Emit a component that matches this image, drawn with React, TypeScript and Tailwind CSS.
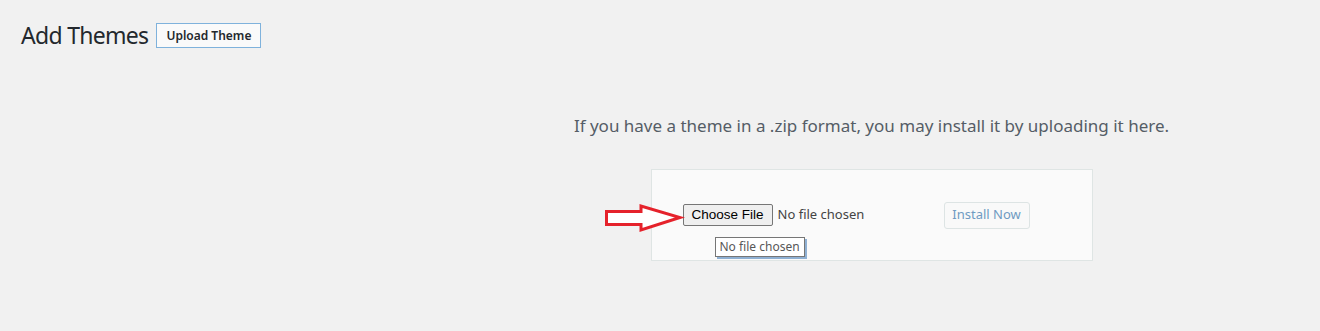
export default function App() {
  return (
    <div
      className="min-h-[331px] w-full bg-[#f1f1f1] text-[#23282d]"
      style={{ fontFamily: '"Noto Sans", "Open Sans", Arial, sans-serif' }}
    >
      <div className="flex items-center gap-[8px] pl-[21px] pt-[23px]">
        <h1 className="text-[23px] font-normal leading-[25px] tracking-[-0.7px] text-[#23282d]">Add Themes</h1>
        <button className="h-[25px] w-[105px] border border-[#7fb2dc] bg-[#fafafa] text-[12px] font-semibold text-[#23282d]">
          Upload Theme
        </button>
      </div>

      <div className="flex flex-col items-center pl-[423px]">
        <p className="mt-[66px] text-[17px] leading-[24px] text-[#555d66]">
          If you have a theme in a .zip format, you may install it by uploading it here.
        </p>

        <div className="mt-[31px] flex h-[92px] w-[442px] items-center border border-[#dfe5e4] bg-[#fafafa] pl-[31px]">
          <div className="relative flex w-[261px] items-center">
            <svg
              className="absolute left-[-80px] top-[-2px]"
              width="82"
              height="32"
              viewBox="0 0 82 32"
              fill="none"
            >
              <polygon
                points="3.5,9.5 38,9.5 38,4 77,15.5 38,28 38,22.5 3.5,22.5"
                fill="#ffffff"
                stroke="#e5222b"
                strokeWidth="3"
                strokeLinejoin="miter"
              />
            </svg>
            <button
              className="h-[22px] w-[90px] rounded-[2px] border border-[#767676] bg-[#efefef] text-[13.5px] leading-none text-black"
              style={{ fontFamily: '"Liberation Sans", Arial, sans-serif' }}
            >
              Choose File
            </button>
            <span className="ml-[5px] text-[13px] text-[#444]">No file chosen</span>
            <div className="absolute left-[32px] top-[33px] border border-[#767676] bg-white px-[4px] py-[1px] text-[12px] leading-[16px] text-[#575757] shadow-[2px_2px_0_#8fb0d3]">
              No file chosen
            </div>
          </div>
          <button className="h-[27px] w-[86px] rounded-[3px] border border-[#dde4e4] bg-[#f9f9f9] text-[13px] text-[#6f9bc2]">
            Install Now
          </button>
        </div>
      </div>
    </div>
  );
}
